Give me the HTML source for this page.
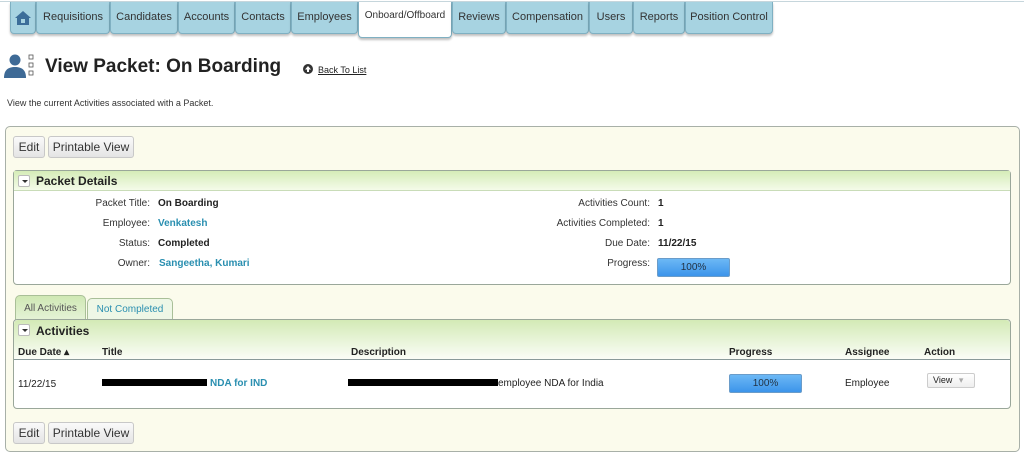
<!DOCTYPE html><html><head><style>
*{margin:0;padding:0;box-sizing:border-box}
body{width:1024px;height:456px;background:#fff;font-family:"Liberation Sans",Arial,sans-serif;position:relative;overflow:hidden;color:#222}
.a{position:absolute}
.tab{position:absolute;top:2px;height:32px;background:#a7d3e1;border:1px solid #7fb0c2;border-top:none;border-radius:0 0 4px 4px;font-size:11px;color:#333;text-align:center;line-height:30px;box-shadow:0 2px 2px rgba(0,0,0,.25)}
.btn{position:absolute;height:22px;border:1px solid #c8c8c8;border-radius:3px;background:linear-gradient(#fafafa,#e4e4e4);font-size:12px;line-height:20px;text-align:center;color:#333}
.panel{position:absolute;left:13px;width:998px;border:1px solid #9aa79a;border-radius:4px;background:#fff}
.ph{height:20px;background:linear-gradient(#d5ecb8,#f4fbe9);border-bottom:1px solid #c9dcb8;font-weight:bold;font-size:12px;line-height:20px;padding-left:22px;position:relative}
.tri{position:absolute;left:4px;top:4px;width:12px;height:12px;background:#fff;border:1px solid #bbb;border-radius:2px}
.tri:after{content:"";position:absolute;left:3px;top:4px;border:3px solid transparent;border-top:3px solid #333}
.lb{position:absolute;font-size:10px;color:#333;text-align:right}
.v{position:absolute;font-size:10px;font-weight:bold}
.lk{color:#2a8fb0}
.prog{position:absolute;height:19px;border:1px solid #6a9cc9;border-radius:2px;background:linear-gradient(#6cb8f5,#3c94ea);font-size:10px;text-align:center;line-height:18px;color:#234}
.th{position:absolute;top:27px;font-size:10px;font-weight:bold}
</style></head><body>
<div class="a" style="left:0;top:1px;width:1024px;height:1px;background:#c6d6dc"></div>
<div class="tab" style="left:10px;width:26px"><svg width="18" height="16" viewBox="0 0 18 16" style="margin-top:8px"><path d="M9 1L1 8h2v7h12V8h2z" fill="#3c6e9a"/><rect x="7" y="9" width="4" height="4" fill="#a7d3e1"/></svg></div>
<div class="tab" style="left:36px;width:74px">Requisitions</div>
<div class="tab" style="left:110px;width:68px">Candidates</div>
<div class="tab" style="left:178px;width:57px">Accounts</div>
<div class="tab" style="left:235px;width:56px">Contacts</div>
<div class="tab" style="left:291px;width:67px">Employees</div>
<div class="tab" style="left:358px;width:94px;height:36px;background:#fff;line-height:28px;font-size:10px">Onboard/Offboard</div>
<div class="tab" style="left:452px;width:54px">Reviews</div>
<div class="tab" style="left:506px;width:83px">Compensation</div>
<div class="tab" style="left:589px;width:44px">Users</div>
<div class="tab" style="left:633px;width:52px">Reports</div>
<div class="tab" style="left:685px;width:88px">Position Control</div>
<svg class="a" style="left:4px;top:53px" width="32" height="26" viewBox="0 0 32 26"><circle cx="11" cy="7" r="5.5" fill="#3e6a96"/><path d="M0 25c0-8 4-11 11-11s11 3 11 11z" fill="#3e6a96"/><rect x="25" y="2" width="4" height="4" fill="none" stroke="#555" stroke-width=".8"/><rect x="25" y="10" width="4" height="4" fill="none" stroke="#555" stroke-width=".8"/><rect x="25" y="18" width="4" height="4" fill="none" stroke="#555" stroke-width=".8"/></svg>
<div class="a" style="left:45px;top:56px;font-size:19px;font-weight:bold;color:#222">View Packet: On Boarding</div>
<svg class="a" style="left:303px;top:64px" width="10" height="10" viewBox="0 0 10 10"><circle cx="5" cy="5" r="5" fill="#333"/><path d="M5 2L2 5.5h2V8h2V5.5h2z" fill="#fff"/></svg>
<div class="a" style="left:318px;top:65px;font-size:9px;text-decoration:underline">Back To List</div>
<div class="a" style="left:7px;top:98px;font-size:9px;color:#333">View the current Activities associated with a Packet.</div>
<div class="a" style="left:5px;top:126px;width:1015px;height:326px;border:1px solid #a8b0a8;border-radius:5px;background:#fbfbec"></div>
<div class="btn" style="left:13px;top:136px;width:32px">Edit</div>
<div class="btn" style="left:48px;top:136px;width:86px">Printable View</div>
<div class="panel" style="top:170px;height:115px"><div class="ph"><span class="tri"></span>Packet Details</div>
<div class="lb" style="left:0;width:136px;top:27px">Packet Title:</div><div class="v" style="left:144px;top:27px">On Boarding</div>
<div class="lb" style="left:0;width:136px;top:47px">Employee:</div><div class="v lk" style="left:144px;top:47px">Venkatesh</div>
<div class="lb" style="left:0;width:136px;top:67px">Status:</div><div class="v" style="left:144px;top:67px">Completed</div>
<div class="lb" style="left:0;width:136px;top:87px">Owner:</div><div class="v lk" style="left:145px;top:87px">Sangeetha, Kumari</div>
<div class="lb" style="left:500px;width:136px;top:27px">Activities Count:</div><div class="v" style="left:644px;top:27px">1</div>
<div class="lb" style="left:500px;width:136px;top:47px">Activities Completed:</div><div class="v" style="left:644px;top:47px">1</div>
<div class="lb" style="left:500px;width:136px;top:67px">Due Date:</div><div class="v" style="left:644px;top:67px">11/22/15</div>
<div class="lb" style="left:500px;width:136px;top:87px">Progress:</div>
<div class="prog" style="left:643px;top:87px;width:73px">100%</div>
</div>
<div class="a" style="left:15px;top:295px;width:71px;height:26px;background:linear-gradient(#cfe8b4,#e6f3d8);border:1px solid #a9bf98;border-bottom:none;border-radius:5px 5px 0 0;font-size:10px;color:#555;text-align:center;line-height:26px">All Activities</div>
<div class="a" style="left:87px;top:298px;width:86px;height:22px;background:#eef7e6;border:1px solid #a9bf98;border-radius:5px 5px 0 0;font-size:10px;color:#2a8fb0;text-align:center;line-height:21px">Not Completed</div>
<div class="panel" style="top:319px;height:90px;background:#fff"><div style="position:absolute;left:0;top:0;right:0;height:40px;background:linear-gradient(#d3eab6,#fbfdf7);border-bottom:1px solid #8a9a9a;border-radius:4px 4px 0 0"></div>
<div style="position:relative;height:20px;font-weight:bold;font-size:12px;line-height:22px;padding-left:22px"><span class="tri"></span>Activities</div>
<div class="th" style="left:4px">Due Date ▴</div><div class="th" style="left:88px">Title</div><div class="th" style="left:337px">Description</div><div class="th" style="left:715px">Progress</div><div class="th" style="left:831px">Assignee</div><div class="th" style="left:910px">Action</div>
<div class="a" style="left:4px;top:59px;font-size:10px">11/22/15</div>
<div class="a" style="left:88px;top:59px;width:105px;height:7px;background:#000"></div>
<div class="a" style="left:196px;top:58px;font-size:10px;font-weight:bold;color:#2a8fb0">NDA for IND</div>
<div class="a" style="left:334px;top:59px;width:150px;height:7px;background:#000"></div>
<div class="a" style="left:484px;top:58px;font-size:10px">employee NDA for India</div>
<div class="prog" style="left:715px;top:54px;width:73px">100%</div>
<div class="a" style="left:831px;top:58px;font-size:10px">Employee</div>
<div class="a" style="left:913px;top:53px;width:48px;height:15px;border:1px solid #ccc;border-radius:2px;background:linear-gradient(#fff,#eee);font-size:9px;line-height:13px;padding-left:5px">View <span style="color:#aaa;margin-left:4px">▾</span></div>
</div>
<div class="btn" style="left:13px;top:422px;width:32px">Edit</div>
<div class="btn" style="left:48px;top:422px;width:86px">Printable View</div>
</body></html>
